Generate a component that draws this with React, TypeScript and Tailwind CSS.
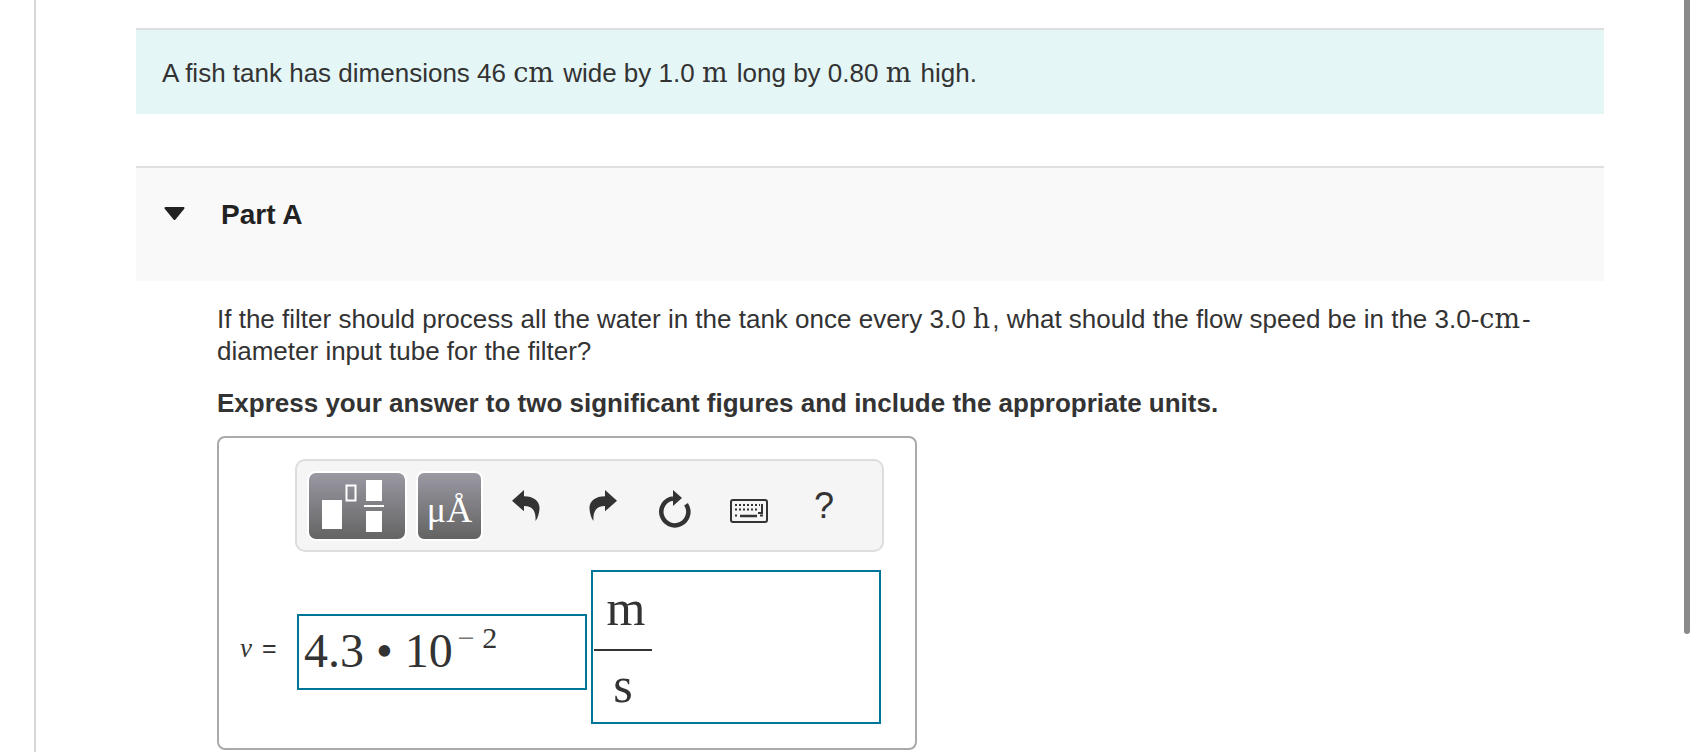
import React from 'react';

const sans = { fontFamily: '"Liberation Sans", Arial, sans-serif' };

// math units are set in a serif face, like the MathJax output in the original
const Unit = ({ children }: { children: React.ReactNode }) => (
  <span className="mr-[2px] font-['DejaVu_Serif',serif] text-[27px] leading-none">{children}</span>
);

const TemplatesIcon = () => (
  <svg width="100" height="70" viewBox="0 0 100 70" className="block shrink-0">
    <defs>
      <linearGradient id="btnA" x1="0" y1="0" x2="0" y2="1">
        <stop offset="0" stopColor="#9b99a3" />
        <stop offset="1" stopColor="#636363" />
      </linearGradient>
    </defs>
    <rect x="1" y="1" width="98" height="68" rx="8" fill="url(#btnA)" stroke="#fff" strokeWidth="2" />
    <rect x="15" y="29" width="20" height="29" fill="#fff" />
    <rect x="39.500" y="14.500" width="9" height="15" fill="none" stroke="#fff" strokeWidth="2" />
    <rect x="59" y="9" width="16" height="21" fill="#fff" />
    <rect x="57" y="34" width="20" height="2" fill="#fff" />
    <rect x="59" y="40" width="16" height="21" fill="#fff" />
  </svg>
);

const UndoIcon = ({ flip }: { flip?: boolean }) => (
  <svg
    width="28"
    height="32"
    viewBox="0 0 28 36"
    preserveAspectRatio="none"
    className={flip ? 'block shrink-0 -scale-x-100' : 'block shrink-0'}
  >
    <path d="M0 12 L12 0 L12 7 C22 7 28 13 27.500 21 C27.200 26 26 31 23.500 35 C24 26 22 18 12 18 L12 24 Z" fill="#333" />
  </svg>
);

const ResetIcon = () => (
  <svg width="34" height="40" viewBox="0 0 34 40" className="block shrink-0">
    <path d="M15 10.500 A13.500 13.500 0 1 0 28 16.300" fill="none" stroke="#333" strokeWidth="4.500" />
    <path d="M15 2 L24 10 L15 18 Z" fill="#333" />
  </svg>
);

const KeyboardIcon = () => (
  <svg width="38" height="24" viewBox="0 0 38 24" className="block shrink-0">
    <rect x="1" y="1" width="36" height="22" rx="2" fill="#f5f5f5" stroke="#333" strokeWidth="2" />
    <path d="M5 6h25M5 10.500h22M5 16.500h3" stroke="#333" strokeWidth="2" strokeDasharray="2 2" fill="none" />
    <path d="M32 5v9h-4M30 16.500h3" stroke="#333" strokeWidth="2" fill="none" />
    <path d="M10 17h17" stroke="#333" strokeWidth="2.500" />
  </svg>
);

export default function App() {
  return (
    <div className="relative h-[752px] overflow-hidden bg-white text-[#333]" style={sans}>
      <div className="ml-[34px] h-full w-[1570px] border-l-2 border-[#d6d6d6] pl-[100px] pt-[28px]">
        <div className="h-[86px] border-t-2 border-[#dcdfe0] bg-[#e5f6f7] pl-[26px] pt-[27px] text-[26px] leading-[32px]">
          A fish tank has dimensions 46 <Unit>cm</Unit> wide by 1.0 <Unit>m</Unit> long by 0.80 <Unit>m</Unit> high.
        </div>

        <div className="mt-[52px] h-[115px] border-t-2 border-[#e0e0e0] bg-[#f9f9f9]">
          <div className="flex items-center pl-[28px] pt-[30px]">
            <svg width="21" height="13" viewBox="0 0 21 13" className="mb-[3px] block">
              <path d="M1.500 1 H19.500 L10.500 12 Z" fill="#222" stroke="#222" strokeWidth="2" strokeLinejoin="round" />
            </svg>
            <span className="ml-[36px] text-[28px] font-bold leading-[34px] text-[#222]">Part A</span>
          </div>
        </div>

        <div className="pl-[81px] pt-[22px]">
          <p className="whitespace-nowrap text-[26px] leading-[32px]">
            If the filter should process all the water in the tank once every 3.0 <Unit>h</Unit>, what should the flow speed be in the 3.0-<Unit>cm</Unit>-
            <br />
            diameter input tube for the filter?
          </p>
          <p className="mt-[20px] whitespace-nowrap text-[26px] font-bold leading-[32px]">
            Express your answer to two significant figures and include the appropriate units.
          </p>

          <div className="mt-[17px] h-[314px] w-[700px] rounded-[8px] border-2 border-[#aaa]">
            <div className="ml-[76px] mt-[21px] flex h-[93px] w-[589px] items-center rounded-[10px] border-2 border-[#ddd] bg-[#f5f5f5] pl-[10px]">
              <TemplatesIcon />
              <div className="ml-[9px] flex h-[70px] w-[67px] shrink-0 items-center justify-center rounded-[8px] border-2 border-white bg-gradient-to-b from-[#9b99a3] to-[#636363] pt-[8px] font-['Liberation_Serif',serif] text-[36px] leading-none text-white">
                μÅ
              </div>
              <div className="ml-[29px]"><UndoIcon /></div>
              <div className="ml-[49px]"><UndoIcon flip /></div>
              <div className="ml-[41px] mt-[4px]"><ResetIcon /></div>
              <div className="ml-[38px] mt-[10px]"><KeyboardIcon /></div>
              <span className="ml-[46px] text-[36px] leading-none">?</span>
            </div>

            <div className="mt-[18px] flex items-start pl-[21px] font-['Liberation_Serif',serif]">
              <div className="mt-[63px] flex w-[57px] items-baseline gap-[10px] text-[27px] leading-[30px]">
                <i>v</i> <span style={sans} className="text-[25px]">=</span>
              </div>
              <div className="mt-[44px] flex h-[76px] w-[290px] items-start border-2 border-[#00759a] pl-[5px] pt-[7px] text-[48px] leading-[56px]">
                4.3 • 10
                <span className="ml-[5px] mt-[-5px] text-[30px] leading-[40px]">
                  <span className="text-[#777]">−</span> 2
                </span>
              </div>
              <div className="ml-[4px] h-[154px] w-[290px] border-2 border-[#00759a] pl-[1px] text-[50px]">
                <div className="flex w-[58px] flex-col items-center">
                  <span className="ml-[6px] mt-[8px] h-[69px] leading-[56px]">m</span>
                  <span className="h-[2px] w-[58px] bg-[#333]" />
                  <span className="mt-[6px] leading-[56px]">s</span>
                </div>
              </div>
            </div>
          </div>
        </div>
      </div>

      {/* overlay scrollbar */}
      <div className="absolute right-[6px] top-0 h-[634px] w-[6px] rounded-b-[3px] bg-[#8a8a8a]" />
    </div>
  );
}
